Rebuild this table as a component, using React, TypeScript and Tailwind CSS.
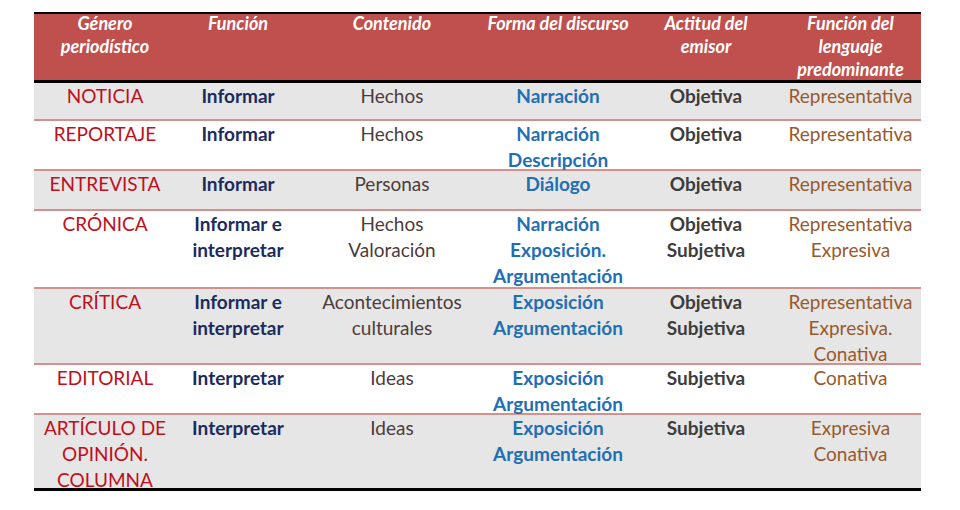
import React from "react";

type Row = {
  genero: string[];
  funcion: string[];
  contenido: string[];
  forma: string[];
  actitud: string[];
  lenguaje: string[];
  h: string;
  gray: boolean;
};

const rows: Row[] = [
  { genero: ["NOTICIA"], funcion: ["Informar"], contenido: ["Hechos"], forma: ["Narración"], actitud: ["Objetiva"], lenguaje: ["Representativa"], h: "h-[38px]", gray: true },
  { genero: ["REPORTAJE"], funcion: ["Informar"], contenido: ["Hechos"], forma: ["Narración", "Descripción"], actitud: ["Objetiva"], lenguaje: ["Representativa"], h: "h-[50px]", gray: false },
  { genero: ["ENTREVISTA"], funcion: ["Informar"], contenido: ["Personas"], forma: ["Diálogo"], actitud: ["Objetiva"], lenguaje: ["Representativa"], h: "h-[40px]", gray: true },
  { genero: ["CRÓNICA"], funcion: ["Informar e", "interpretar"], contenido: ["Hechos", "Valoración"], forma: ["Narración", "Exposición.", "Argumentación"], actitud: ["Objetiva", "Subjetiva"], lenguaje: ["Representativa", "Expresiva"], h: "h-[78px]", gray: false },
  { genero: ["CRÍTICA"], funcion: ["Informar e", "interpretar"], contenido: ["Acontecimientos", "culturales"], forma: ["Exposición", "Argumentación"], actitud: ["Objetiva", "Subjetiva"], lenguaje: ["Representativa", "Expresiva.", "Conativa"], h: "h-[76px]", gray: true },
  { genero: ["EDITORIAL"], funcion: ["Interpretar"], contenido: ["Ideas"], forma: ["Exposición", "Argumentación"], actitud: ["Subjetiva"], lenguaje: ["Conativa"], h: "h-[50px]", gray: false },
  { genero: ["ARTÍCULO DE", "OPINIÓN.", "COLUMNA"], funcion: ["Interpretar"], contenido: ["Ideas"], forma: ["Exposición", "Argumentación"], actitud: ["Subjetiva"], lenguaje: ["Expresiva", "Conativa"], h: "h-[76px]", gray: true },
];

const cols = "grid grid-cols-[142px_124px_184px_148px_148px_141px]";

const Lines = ({ items, className }: { items: string[]; className: string }) => (
  <div className={`text-center leading-[26px] ${className}`}>
    {items.map((t, i) => (
      <div key={i} className="whitespace-nowrap">{t}</div>
    ))}
  </div>
);

export default function App() {
  return (
    <div className="w-[960px] h-[510px] bg-white pt-[12px] pl-[34px] font-['Lato','Liberation_Sans',sans-serif]">
      <div className="w-[887px] border-t-[2px] border-black">
        {/* header */}
        <div className={`${cols} h-[69px] bg-[#c0504d] border-b-[3px] border-black text-white font-bold italic text-[18px] leading-[23px]`}>
          <div className="text-center -mt-[2px]">Género<br />periodístico</div>
          <div className="text-center -mt-[2px]">Función</div>
          <div className="text-center -mt-[2px]">Contenido</div>
          <div className="text-center -mt-[2px]">Forma del discurso</div>
          <div className="text-center -mt-[2px]">Actitud del<br />emisor</div>
          <div className="text-center -mt-[2px]">Función del<br />lenguaje<br />predominante</div>
        </div>

        {rows.map((r, i) => (
          <div
            key={i}
            className={`${cols} ${r.h} text-[19px] ${
              i === rows.length - 1 ? "border-b-[3px] border-black" : "border-b-2 border-[#d3908d]"
            } ${r.gray ? "bg-[#e6e6e6]" : "bg-white"}`}
          >
            <Lines items={r.genero} className="text-[#c0101c]" />
            <Lines items={r.funcion} className="text-[#1c2b5e] font-bold" />
            <Lines items={r.contenido} className="text-[#4d3b3b]" />
            <Lines items={r.forma} className="text-[#1f6fb5] font-bold" />
            <Lines items={r.actitud} className="text-[#3d3d3d] font-bold" />
            <Lines items={r.lenguaje} className="text-[#985a2c]" />
          </div>
        ))}
      </div>
    </div>
  );
}
